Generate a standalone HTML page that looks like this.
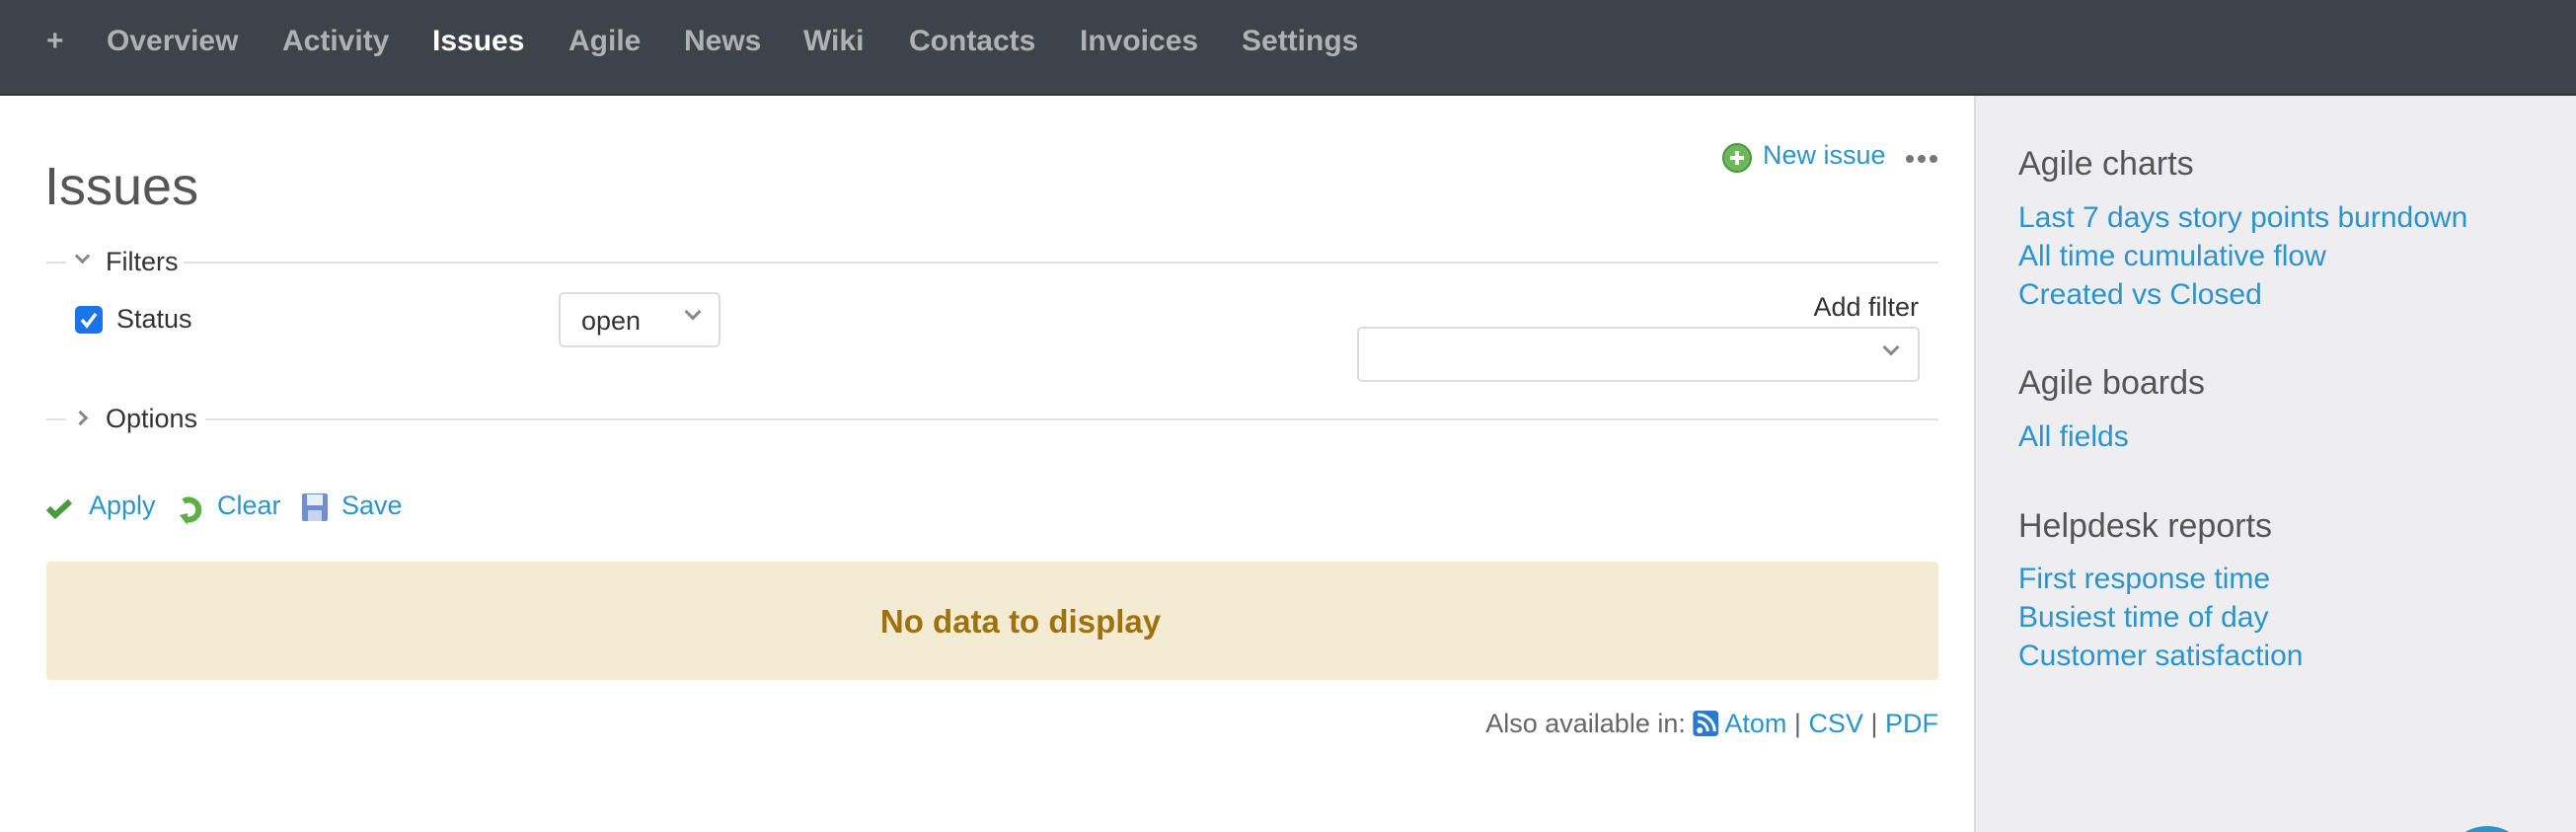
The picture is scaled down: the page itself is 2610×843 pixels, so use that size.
<!DOCTYPE html>
<html style="overflow:hidden;width:2610px;height:843px"><head><meta charset="utf-8"><style>
*{margin:0;padding:0;box-sizing:border-box}
body{width:2610px;height:843px;overflow:hidden;background:#fff;font-family:"Liberation Sans",Arial,sans-serif;font-size:27px;color:#333;position:relative}
.a{position:absolute;white-space:nowrap}
#nav{position:absolute;left:0;top:0;width:2610px;height:97px;background:#3e434a;border-bottom:2px solid #2f3338}
#nav span{position:absolute;top:25px;font-weight:bold;font-size:30px;color:#aeb2b7}
#side{position:absolute;left:2000px;top:97px;width:610px;height:746px;background:#eeedf0;border-left:2px solid #dcdcdf}
a,.l{color:#2a94cc;text-decoration:none}
.s{font-size:30px}
.h3{font-size:34px;color:#555}
.line{position:absolute;height:2px;background:#e2e2e2}
.sel{position:absolute;border:2px solid #ddd;border-radius:5px;background:#fff}
.chev{position:absolute;width:14px;height:14px;border-right:3px solid #888;border-bottom:3px solid #888;transform:rotate(45deg)}
</style></head><body>
<div id="nav">
<span style="left:47px">+</span>
<span style="left:108px">Overview</span>
<span style="left:286px">Activity</span>
<span style="left:438px;color:#fff">Issues</span>
<span style="left:576px">Agile</span>
<span style="left:693px">News</span>
<span style="left:814px">Wiki</span>
<span style="left:921px">Contacts</span>
<span style="left:1094px">Invoices</span>
<span style="left:1258px">Settings</span>
</div>

<div class="a" style="left:45px;top:158px;font-size:54px;color:#555">Issues</div>

<svg class="a" style="left:1744px;top:144px" width="32" height="32" viewBox="0 0 32 32"><circle cx="16" cy="16" r="14" fill="#6cb85a" stroke="#4a9a3c" stroke-width="2"/><path d="M16 9v14M9 16h14" stroke="#fff" stroke-width="4"/></svg>
<div class="a l" style="left:1786px;top:142px">New issue</div>
<svg class="a" style="left:1930px;top:156px" width="34" height="10"><circle cx="5" cy="5" r="4" fill="#777"/><circle cx="17" cy="5" r="4" fill="#777"/><circle cx="29" cy="5" r="4" fill="#777"/></svg>

<div class="line" style="left:47px;top:265px;width:20px"></div>
<div class="chev" style="left:78px;top:254px;width:11px;height:11px"></div>
<div class="a" style="left:107px;top:250px">Filters</div>
<div class="line" style="left:186px;top:265px;width:1778px"></div>

<div class="a" style="left:76px;top:310px;width:28px;height:28px;background:#1a73e8;border-radius:5px"><svg width="28" height="28"><path d="M7 14l5 6 9-12" stroke="#fff" stroke-width="3.5" fill="none"/></svg></div>
<div class="a" style="left:118px;top:308px">Status</div>
<div class="sel" style="left:566px;top:296px;width:164px;height:56px"></div>
<div class="a" style="left:589px;top:310px">open</div>
<div class="chev" style="left:696px;top:310px;width:12px;height:12px"></div>

<div class="a" style="left:1944px;top:296px;transform:translateX(-100%)">Add filter</div>
<div class="sel" style="left:1375px;top:331px;width:570px;height:56px"></div>
<div class="chev" style="left:1910px;top:346px;width:12px;height:12px"></div>

<div class="line" style="left:47px;top:424px;width:20px"></div>
<div class="chev" style="left:76px;top:418px;width:11px;height:11px;transform:rotate(-45deg)"></div>
<div class="a" style="left:107px;top:409px">Options</div>
<div class="line" style="left:208px;top:424px;width:1756px"></div>

<svg class="a" style="left:46px;top:500px" width="28" height="28"><path d="M3 15l7 7 15-14" stroke="#4a9a3c" stroke-width="6" fill="none"/></svg>
<div class="a l" style="left:90px;top:497px">Apply</div>
<svg class="a" style="left:178px;top:500px" width="32" height="34"><path d="M8 8a10 10 0 1 1 2 18" stroke="#5cae46" stroke-width="6" fill="none"/><path d="M4 22l8-2 0 12z" fill="#5cae46"/></svg>
<div class="a l" style="left:220px;top:497px">Clear</div>
<svg class="a" style="left:305px;top:499px" width="28" height="30"><rect x="1" y="1" width="26" height="28" rx="2" fill="#6f8fd0"/><rect x="6" y="2" width="16" height="11" fill="#e8eefa"/><rect x="7" y="18" width="14" height="11" fill="#c8d4ee"/></svg>
<div class="a l" style="left:346px;top:497px">Save</div>

<div class="a" style="left:47px;top:569px;width:1917px;height:120px;background:#f4ecd2;border-radius:4px"></div>
<div class="a" style="left:1034px;top:611px;transform:translateX(-50%);font-weight:bold;font-size:33px;color:#a0720f">No data to display</div>

<div class="a" style="left:1964px;top:718px;transform:translateX(-100%);color:#666">Also available in: <svg width="26" height="28" style="vertical-align:-5px"><rect x="0" y="1" width="26" height="26" rx="4" fill="#2a7bd0"/><circle cx="7" cy="21" r="3" fill="#fff"/><path d="M5 12a10 10 0 0 1 10 10M5 5a17 17 0 0 1 17 17" stroke="#fff" stroke-width="3" fill="none"/></svg> <a>Atom</a> | <a>CSV</a> | <a>PDF</a></div>

<div id="side"></div>
<svg class="a" style="left:2470px;top:836px" width="100" height="7"><path d="M27.6 7A45 45 0 0 1 72.4 7Z" fill="#2a94cc"/></svg>
<div class="a h3" style="left:2045px;top:147px">Agile charts</div>
<div class="a l s" style="left:2045px;top:204px">Last 7 days story points burndown</div>
<div class="a l s" style="left:2045px;top:243px">All time cumulative flow</div>
<div class="a l s" style="left:2045px;top:282px">Created vs Closed</div>
<div class="a h3" style="left:2045px;top:369px">Agile boards</div>
<div class="a l s" style="left:2045px;top:426px">All fields</div>
<div class="a h3" style="left:2045px;top:514px">Helpdesk reports</div>
<div class="a l s" style="left:2045px;top:570px">First response time</div>
<div class="a l s" style="left:2045px;top:609px">Busiest time of day</div>
<div class="a l s" style="left:2045px;top:648px">Customer satisfaction</div>
</body></html>
